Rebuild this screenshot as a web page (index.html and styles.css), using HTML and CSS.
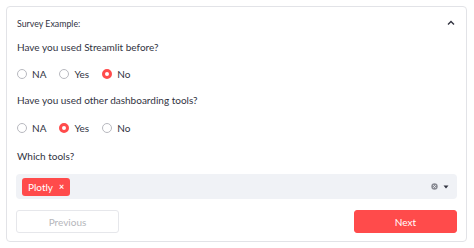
FILE: index.html
```html
<!DOCTYPE html>
<html>
<head>
<meta charset="utf-8">
<link rel="stylesheet" href="styles.css">
</head>
<body>
<div class="card">
  <div class="header">
    <span class="title">Survey Example:</span>
    <svg class="chev" width="8" height="6" viewBox="0 0 8 6"><path d="M1 4.5 L4 1.5 L7 4.5" fill="none" stroke="#31333f" stroke-width="1.4"/></svg>
  </div>
  <div class="q q1">Have you used Streamlit before?</div>
  <div class="radios r1">
    <span class="opt"><span class="dot"></span>NA</span>
    <span class="opt"><span class="dot"></span>Yes</span>
    <span class="opt"><span class="dot on"></span>No</span>
  </div>
  <div class="q q2">Have you used other dashboarding tools?</div>
  <div class="radios r2">
    <span class="opt"><span class="dot"></span>NA</span>
    <span class="opt"><span class="dot on"></span>Yes</span>
    <span class="opt"><span class="dot"></span>No</span>
  </div>
  <div class="q q3">Which tools?</div>
  <div class="select">
    <span class="tag">Plotly<span class="x">×</span></span>
    <span class="icons">
      <svg width="7" height="7" viewBox="0 0 7 7"><circle cx="3.5" cy="3.5" r="3.2" fill="#8a8c94"/><path d="M2.2 2.2 L4.8 4.8 M4.8 2.2 L2.2 4.8" stroke="#f0f2f6" stroke-width="0.9"/></svg>
      <svg width="6" height="4" viewBox="0 0 6 4"><path d="M0.5 0.5 L5.5 0.5 L3 3.5 Z" fill="#31333f"/></svg>
    </span>
  </div>
  <div class="buttons">
    <button class="btn prev">Previous</button>
    <button class="btn next">Next</button>
  </div>
</div>
</body>
</html>
```
FILE: styles.css
```css
html, body {
  margin: 0;
  padding: 0;
  background: #fff;
}
body {
  font-family: "Source Sans Pro", Lato, "Noto Sans", sans-serif;
  color: #31333f;
}
.card {
  box-sizing: border-box;
  margin: 6px 0 0 6px;
  width: 461px;
  height: 236px;
  border: 1px solid #e2e3e7;
  border-radius: 4px;
  padding: 0 9px 0 9px;
  display: flex;
  flex-direction: column;
}
.header {
  height: 31px;
  display: flex;
  align-items: center;
  justify-content: space-between;
  padding-left: 1px;
}
.title {
  font-size: 8.8px;
  padding-top: 2px;
}
.chev {
  margin-right: 2px;
}
.q {
  font-size: 10px;
  display: flex;
  align-items: center;
  padding-left: 1px;
}
.q1 { height: 18px; }
.r1 { height: 36px; }
.q2 { height: 16px; }
.r2 { height: 40px; }
.q3 { height: 16px; margin-bottom: 10px; }
.radios {
  display: flex;
  align-items: center;
  gap: 13px;
  font-size: 10px;
  padding-left: 1px;
}
.opt {
  display: flex;
  align-items: center;
}
.dot {
  box-sizing: border-box;
  width: 10px;
  height: 10px;
  border-radius: 50%;
  border: 1px solid #b8b9bf;
  margin-right: 5px;
  background: #fff;
}
.dot.on {
  border: 3px solid #ff4b4b;
  background: #fff;
}
.select {
  height: 25px;
  background: #f0f2f6;
  border-radius: 4px;
  display: flex;
  align-items: center;
  justify-content: space-between;
  padding: 0 8px 0 6px;
}
.tag {
  height: 18px;
  background: #ff4b4b;
  color: #fff;
  border-radius: 3px;
  font-size: 10px;
  display: flex;
  align-items: center;
  padding: 0 6px 0 6px;
}
.x {
  margin-left: 6px;
  font-size: 9px;
  font-weight: bold;
}
.icons {
  display: flex;
  align-items: center;
  gap: 5px;
}
.buttons {
  margin-top: 11px;
  display: flex;
  justify-content: space-between;
}
.btn {
  width: 103px;
  height: 23px;
  border-radius: 3px;
  font-family: inherit;
  font-size: 10px;
  padding: 0;
}
.prev {
  background: #fff;
  border: 1px solid #e6e7eb;
  color: #b5b6bb;
}
.next {
  background: #ff4b4b;
  border: 1px solid #ff4b4b;
  color: #fff;
}
```
